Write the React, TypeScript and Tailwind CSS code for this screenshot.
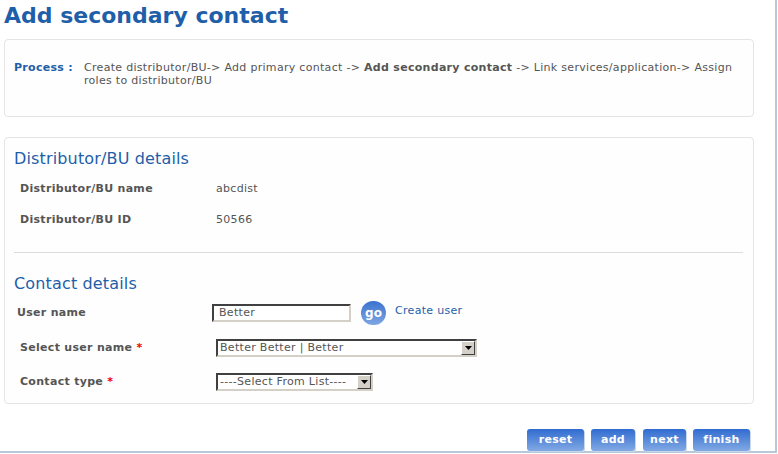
import React from 'react';

const font = { fontFamily: '"DejaVu Sans", Verdana, sans-serif' };

function Select({ value, width }: { value: string; width: string }) {
  return (
    <div className={`flex h-[18px] ${width} border-2 border-t-[#404040] border-l-[#404040] border-b-[#d4d0c8] border-r-[#d4d0c8] bg-white`}>
      <div className="flex-1 truncate pl-[2px] text-[11px] leading-[14px] text-[#555]">{value}</div>
      <div className="flex w-[14px] items-center justify-center border border-t-[#fff] border-l-[#fff] border-b-[#404040] border-r-[#404040] bg-[#d4d0c8]">
        <svg width="7" height="4" viewBox="0 0 7 4">
          <path d="M0 0h7L3.5 4z" fill="#000" />
        </svg>
      </div>
    </div>
  );
}

function ActionButton({ label, width }: { label: string; width: string }) {
  return (
    <button
      className={`h-[22px] ${width} rounded-[3px] bg-gradient-to-b from-[#2f6bd0] to-[#82a9e3] text-[11px] font-bold text-white shadow-[1px_1px_0_#c9d6e8]`}
    >
      {label}
    </button>
  );
}

export default function App() {
  return (
    <div className="h-[454px] w-[778px] bg-white text-[11px] tracking-[0.3px] text-[#555]" style={font}>
      <div className="h-[453px] w-[777px] border-b-2 border-r-2 border-[#b6c8da]">
        <h1 className="pl-[4px] pt-[2px] text-[22px] font-bold leading-[28px] tracking-normal text-[#1f5ea8]">
          Add secondary contact
        </h1>

        {/* process box */}
        <div className="ml-[4px] mt-[9px] h-[78px] w-[750px] rounded-[4px] border border-[#e4e4e4] bg-[#fefefe] pl-[9px] pt-[21px]">
          <div className="flex leading-[13px]">
            <div className="w-[70px] shrink-0 font-bold text-[#1f5ea8]">Process :</div>
            <p className="w-[652px]">
              Create distributor/BU-&gt; Add primary contact -&gt; <span className="font-bold">Add secondary contact</span> -&gt; Link services/application-&gt; Assign roles to distributor/BU
            </p>
          </div>
        </div>

        {/* details box */}
        <div className="ml-[4px] mt-[20px] h-[267px] w-[750px] rounded-[4px] border border-[#e4e4e4] bg-[#fefefe] px-[9px]">
          <div className="pt-[12px] text-[16px] leading-[18px] tracking-[0.15px] text-[#1f5ea8]">Distributor/BU details</div>
          <div className="mt-[15px] flex h-[13px] items-center pl-[6px]">
            <div className="w-[196px] font-bold">Distributor/BU name</div>
            <div>abcdist</div>
          </div>
          <div className="mt-[18px] flex h-[13px] items-center pl-[6px]">
            <div className="w-[196px] font-bold">Distributor/BU ID</div>
            <div>50566</div>
          </div>
          <div className="mt-[25px] h-px w-[729px] bg-[#dcdcdc]" />

          <div className="mt-[22px] text-[16px] leading-[18px] tracking-[0.15px] text-[#1f5ea8]">Contact details</div>
          <div className="mt-[8px] flex h-[24px] items-center pl-[3px]">
            <div className="w-[195px] font-bold">User name</div>
            <div className="flex h-[18px] w-[139px] items-center border-2 border-t-[#404040] border-l-[#404040] border-b-[#d4d0c8] border-r-[#d4d0c8] bg-white pl-[5px] text-[11px]">
              Better
            </div>
            <div className="ml-[10px] flex h-[24px] w-[25px] items-center justify-center rounded-full bg-gradient-to-b from-[#3a72cf] to-[#7fa6e2] text-[12px] font-bold tracking-normal text-white">
              go
            </div>
            <div className="-mt-[4px] ml-[9px] text-[#1f5ea8]">Create user</div>
          </div>
          <div className="mt-[14px] flex h-[18px] items-center pl-[6px]">
            <div className="w-[196px] font-bold">
              Select user name <span className="text-[#e00]">*</span>
            </div>
            <Select value="Better Better | Better" width="w-[261px]" />
          </div>
          <div className="mt-[16px] flex h-[18px] items-center pl-[6px]">
            <div className="w-[196px] font-bold">
              Contact type <span className="text-[#e00]">*</span>
            </div>
            <Select value="----Select From List----" width="w-[157px]" />
          </div>
        </div>

        <div className="mt-[25px] flex justify-end pr-[25px]">
          <ActionButton label="reset" width="w-[57px]" />
          <div className="w-[7px]" />
          <ActionButton label="add" width="w-[44px]" />
          <div className="w-[8px]" />
          <ActionButton label="next" width="w-[43px]" />
          <div className="w-[7px]" />
          <ActionButton label="finish" width="w-[57px]" />
        </div>
      </div>
    </div>
  );
}
